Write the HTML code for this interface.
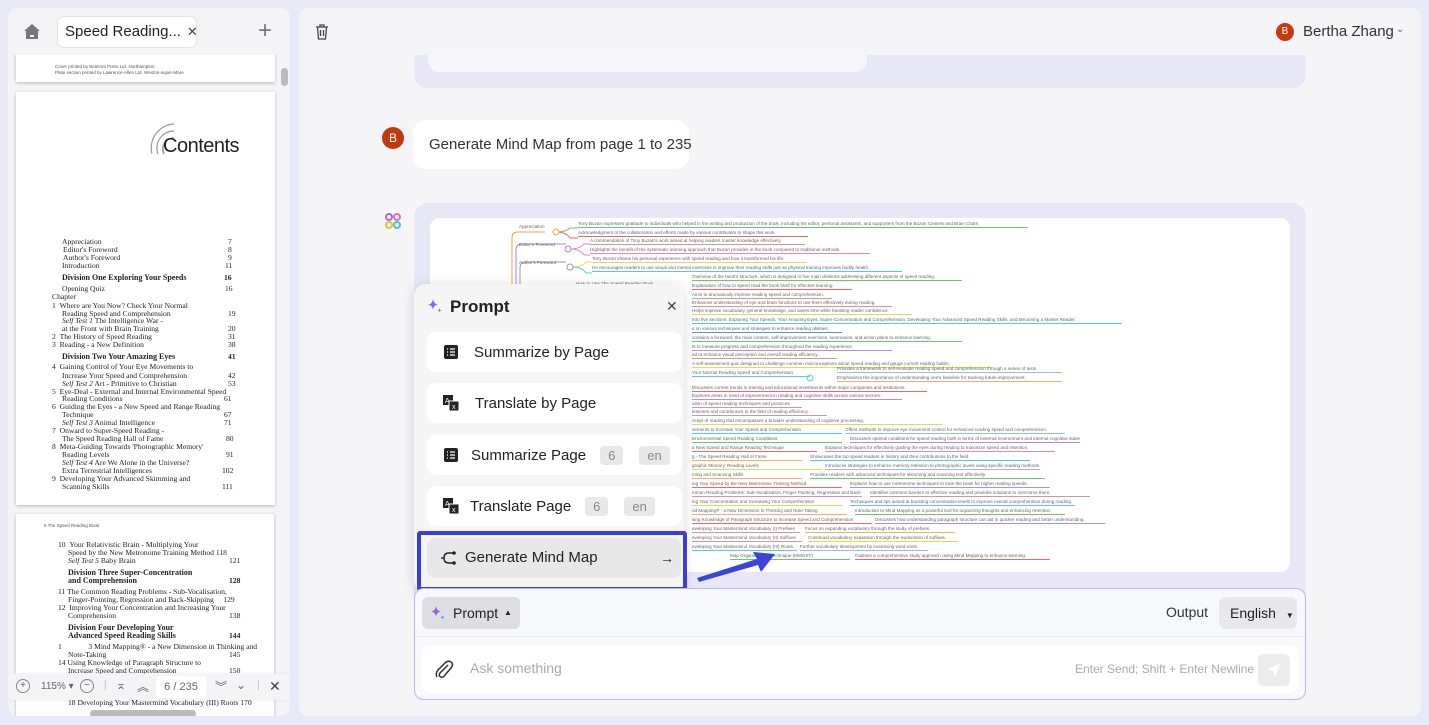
<!DOCTYPE html>
<html><head><meta charset="utf-8">
<style>
*{box-sizing:border-box;margin:0;padding:0}
body{width:1429px;height:725px;overflow:hidden;background:#e9e9f7;font-family:"Liberation Sans",sans-serif;position:relative;color:#222}
.abs{position:absolute}
#side{left:8px;top:8px;width:282px;height:708px;background:#f4f4f6;border-radius:10px;overflow:hidden}
#main{left:299px;top:8px;width:1122px;height:708px;background:#f5f5f7;border-radius:10px;overflow:hidden}
.pg{background:#fff;box-shadow:0 1px 3px rgba(0,0,0,.25)}
.t{position:absolute;font-family:"Liberation Serif",serif;font-size:7.6px;color:#222;white-space:nowrap;line-height:8px}
.b{font-weight:bold;font-size:8px}
.n{position:absolute;font-family:"Liberation Serif",serif;font-size:7.6px;line-height:8px}
.mm{position:absolute;font-size:4.6px;color:#666;white-space:nowrap;line-height:6px;border-bottom:1px solid;overflow:hidden}
.item{position:absolute;left:13px;width:255px;height:40px;background:#fff;border-radius:9px;font-size:15px;color:#222;display:flex;align-items:center;white-space:nowrap}
.tag{display:inline-block;background:#e8e8e8;color:#888;border-radius:4px;font-size:13px;padding:2px 8px;margin-left:14px}
</style></head><body>

<div id="side" class="abs">
  <svg class="abs" style="left:16px;top:16px" width="16" height="15" viewBox="0 0 16 15"><path d="M8 0 L16 7 L14 7 L14 15 L2 15 L2 7 L0 7Z" fill="#777"/><rect x="6" y="11" width="4" height="2" fill="#f4f4f6"/></svg>
  <div class="abs" style="left:49px;top:8px;width:140px;height:32px;background:#fff;border-radius:7px;border:1px solid #e4e4e4;font-size:15px;line-height:30px;padding-left:7px;white-space:nowrap">Speed Reading...<span style="margin-left:6px;color:#444;font-size:13px">✕</span></div>
  <div class="abs" style="left:250px;top:9px;font-size:24px;color:#777;font-weight:300">+</div>
  <div class="abs" style="left:0;top:47px;width:282px;height:661px;overflow:hidden">
    <div class="abs pg" style="left:8px;top:-20px;width:259px;height:47px">
      <div class="t" style="left:39px;top:28px;font-size:4.5px;font-family:'Liberation Sans';color:#555">Cover printed by Belmont Press Ltd. Northampton</div>
      <div class="t" style="left:39px;top:34px;font-size:4.5px;font-family:'Liberation Sans';color:#555">Plate section printed by Lawrence-Allen Ltd. Weston-super-Mare</div>
    </div>
    <div class="abs pg" style="left:8px;top:37px;width:259px;height:413px">
      <svg class="abs" style="left:118px;top:24px" width="42" height="42"><path d="M18 38 A24 24 0 0 1 40 8" stroke="#999" stroke-width="1.2" fill="none"/><path d="M24 38 A17 17 0 0 1 40 15" stroke="#999" stroke-width="1.2" fill="none"/><path d="M30 38 A11 11 0 0 1 40 22" stroke="#999" stroke-width="1.6" fill="none"/></svg>
      <div class="abs" style="left:147px;top:43px;font-size:20px;color:#222;letter-spacing:-.5px">Contents</div>
      <div class="t" style="left:46px;top:146px">Appreciation</div><div class="n" style="left:212px;top:146px">7</div>
      <div class="t" style="left:47px;top:154px">Editor's Foreword</div><div class="n" style="left:212px;top:154px">8</div>
      <div class="t" style="left:47px;top:162px">Author's Foreword</div><div class="n" style="left:212px;top:162px">9</div>
      <div class="t" style="left:46px;top:170px">Introduction</div><div class="n" style="left:209px;top:170px">11</div>
      <div class="t b" style="left:46px;top:182px">Division One Exploring Your Speeds</div><div class="n b" style="left:208px;top:182px">16</div>
      <div class="t" style="left:46px;top:193px">Opening Quiz</div><div class="n" style="left:209px;top:193px">16</div>
      <div class="t" style="left:36px;top:201px">Chapter</div>
      <div class="t" style="left:36px;top:210px">1&nbsp;&nbsp;Where are You Now? Check Your Normal</div>
      <div class="t" style="left:46px;top:218px">Reading Speed and Comprehension</div><div class="n" style="left:212px;top:218px">19</div>
      <div class="t" style="left:46px;top:225px"><i>Self Test 1</i> The Intelligence War -</div>
      <div class="t" style="left:46px;top:233px">at the Front with Brain Training</div><div class="n" style="left:212px;top:233px">20</div>
      <div class="t" style="left:36px;top:241px">2&nbsp;&nbsp;The History of Speed Reading</div><div class="n" style="left:212px;top:241px">31</div>
      <div class="t" style="left:36px;top:249px">3&nbsp;&nbsp;Reading - a New Definition</div><div class="n" style="left:212px;top:249px">38</div>
      <div class="t b" style="left:46px;top:261px">Division Two Your Amazing Eyes</div><div class="n b" style="left:212px;top:261px">41</div>
      <div class="t" style="left:36px;top:271px">4&nbsp;&nbsp;Gaining Control of Your Eye Movements to</div>
      <div class="t" style="left:46px;top:280px">Increase Your Speed and Comprehension</div><div class="n" style="left:212px;top:280px">42</div>
      <div class="t" style="left:46px;top:288px"><i>Self Test 2</i> Art - Primitive to Christian</div><div class="n" style="left:212px;top:288px">53</div>
      <div class="t" style="left:36px;top:296px">5&nbsp;&nbsp;Eye-Deal - External and Internal Environmental Speed</div>
      <div class="t" style="left:46px;top:303px">Reading Conditions</div><div class="n" style="left:208px;top:303px">61</div>
      <div class="t" style="left:36px;top:311px">6&nbsp;&nbsp;Guiding the Eyes - a New Speed and Range Reading</div>
      <div class="t" style="left:46px;top:319px">Technique</div><div class="n" style="left:208px;top:319px">67</div>
      <div class="t" style="left:46px;top:327px"><i>Self Test 3</i> Animal Intelligence</div><div class="n" style="left:208px;top:327px">71</div>
      <div class="t" style="left:36px;top:335px">7&nbsp;&nbsp;Onward to Super-Speed Reading -</div>
      <div class="t" style="left:46px;top:343px">The Speed Reading Hall of Fame</div><div class="n" style="left:210px;top:343px">80</div>
      <div class="t" style="left:36px;top:351px">8&nbsp;&nbsp;Meta-Guiding Towards 'Photographic Memory'</div>
      <div class="t" style="left:46px;top:359px">Reading Levels</div><div class="n" style="left:210px;top:359px">91</div>
      <div class="t" style="left:46px;top:367px"><i>Self Test 4</i> Are We Alone in the Universe?</div>
      <div class="t" style="left:46px;top:375px">Extra Terrestrial Intelligences</div><div class="n" style="left:206px;top:375px">102</div>
      <div class="t" style="left:36px;top:383px">9&nbsp;&nbsp;Developing Your Advanced Skimming and</div>
      <div class="t" style="left:46px;top:391px">Scanning Skills</div><div class="n" style="left:206px;top:391px">111</div>
    </div>
    <div class="abs pg" style="left:8px;top:459px;width:258px;height:220px">
      <div class="t" style="left:28px;top:8px;font-size:4.5px;font-family:'Liberation Sans';color:#555">6 The Speed Reading Book</div>
      <div class="t" style="left:42px;top:27px">10&nbsp;&nbsp;Your Relativistic Brain - Multiplying Your</div>
      <div class="t" style="left:52px;top:35px">Speed by the New Metronome Training Method 118</div>
      <div class="t" style="left:52px;top:43px"><i>Self Test 5</i> Baby Brain</div><div class="n" style="left:213px;top:43px">121</div>
      <div class="t b" style="left:52px;top:55px">Division Three Super-Concentration</div>
      <div class="t b" style="left:52px;top:63px">and Comprehension</div><div class="n b" style="left:213px;top:63px">128</div>
      <div class="t" style="left:42px;top:74px">11 The Common Reading Problems - Sub-Vocalisation,</div>
      <div class="t" style="left:52px;top:82px">Finger-Pointing, Regression and Back-Skipping&nbsp;&nbsp;&nbsp;&nbsp;&nbsp;129</div>
      <div class="t" style="left:42px;top:90px">12&nbsp;&nbsp;Improving Your Concentration and Increasing Your</div>
      <div class="t" style="left:52px;top:98px">Comprehension</div><div class="n" style="left:213px;top:98px">138</div>
      <div class="t b" style="left:52px;top:110px">Division Four Developing Your</div>
      <div class="t b" style="left:52px;top:118px">Advanced Speed Reading Skills</div><div class="n b" style="left:213px;top:118px">144</div>
      <div class="t" style="left:42px;top:129px">1&nbsp;&nbsp;&nbsp;&nbsp;&nbsp;&nbsp;&nbsp;&nbsp;&nbsp;&nbsp;&nbsp;&nbsp;&nbsp;&nbsp;3 Mind Mapping® - a New Dimension in Thinking and</div>
      <div class="t" style="left:52px;top:137px">Note-Taking</div><div class="n" style="left:213px;top:137px">145</div>
      <div class="t" style="left:42px;top:145px">14 Using Knowledge of Paragraph Structure to</div>
      <div class="t" style="left:52px;top:153px">Increase Speed and Comprehension</div><div class="n" style="left:213px;top:153px">150</div>
      <div class="t" style="left:52px;top:185px">18 Developing Your Mastermind Vocabulary (III) Roots 170</div>
    </div>
  </div>
  <div class="abs" style="left:273px;top:60px;width:7px;height:18px;background:#bbb;border-radius:4px"></div>
  <div class="abs" style="left:82px;top:702px;width:106px;height:7px;background:#bbb;border-radius:4px"></div>
  <div class="abs" style="left:0;top:666px;width:282px;height:26px;background:#f4f4f6;box-shadow:0 0 4px rgba(0,0,0,.08);font-size:10px;color:#666">
    <span class="abs" style="left:8px;top:5px;width:14px;height:14px;border:1px solid #888;border-radius:50%;text-align:center;line-height:12px">+</span>
    <span class="abs" style="left:33px;top:7px">115% ▾</span>
    <span class="abs" style="left:72px;top:5px;width:14px;height:14px;border:1px solid #888;border-radius:50%;text-align:center;line-height:11px">−</span>
    <span class="abs" style="left:96px;top:6px;color:#bbb">|</span>
    <span class="abs" style="left:108px;top:4px;font-size:12px">⌅</span>
    <span class="abs" style="left:129px;top:4px;font-size:12px">︽</span>
    <span class="abs" style="left:148px;top:2px;width:50px;height:22px;background:#fff;border-radius:4px;text-align:center;line-height:22px;font-size:11px">6 / 235</span>
    <span class="abs" style="left:207px;top:4px;font-size:12px">︾</span>
    <span class="abs" style="left:228px;top:4px;font-size:12px">⌄</span>
    <span class="abs" style="left:249px;top:6px;color:#bbb">|</span>
    <span class="abs" style="left:261px;top:4px;font-size:14px;color:#444">✕</span>
  </div>
</div>

<div id="main" class="abs">
  <div class="abs" style="left:115px;top:-30px;width:892px;height:110px;background:#e8e7f7;border-radius:14px"></div>
  <div class="abs" style="left:129px;top:-30px;width:439px;height:94px;background:#f7f7fb;border-radius:12px"></div>
  <div class="abs" style="left:0;top:0;width:1122px;height:47px;background:#f5f5f7"></div>
  <svg class="abs" style="left:16px;top:16px" width="14" height="16" viewBox="0 0 14 16"><path d="M1 3h12M5 3V1h4v2M2.5 3l1 12h7l1-12M5.5 6v6M8.5 6v6" stroke="#444" stroke-width="1.3" fill="none"/></svg>
  <div class="abs" style="left:977px;top:15px;width:18px;height:18px;border-radius:50%;background:#c73a10;color:#fff;font-size:10px;text-align:center;line-height:18px">B</div>
  <div class="abs" style="left:1004px;top:15px;font-size:15px;color:#333;white-space:nowrap">Bertha Zhang</div>
  <div class="abs" style="left:1097px;top:16px;font-size:10px;color:#666">⌄</div>

  <div class="abs" style="left:83px;top:119px;width:22px;height:22px;border-radius:50%;background:#c0390f;color:#fff;font-size:12px;text-align:center;line-height:22px">B</div>
  <div class="abs" style="left:114px;top:112px;width:276px;height:49px;background:#fff;border-radius:14px;font-size:15px;line-height:49px;padding-left:16px;color:#333;white-space:nowrap">Generate Mind Map from page 1 to 235</div>

  <svg class="abs" style="left:86px;top:205px" width="16" height="16" viewBox="0 0 16 16"><rect x="1" y="1" width="6" height="6" rx="3" fill="none" stroke="#a06cf0" stroke-width="2"/><rect x="9" y="1" width="6" height="6" rx="3" fill="none" stroke="#f06cb0" stroke-width="2"/><rect x="1" y="9" width="6" height="6" rx="3" fill="none" stroke="#f5c030" stroke-width="2"/><rect x="9" y="9" width="6" height="6" rx="3" fill="none" stroke="#40c8e0" stroke-width="2"/></svg>

  <div class="abs" style="left:115px;top:195px;width:892px;height:420px;background:#e8e7f7;border-radius:14px"></div>
  <div class="abs" style="left:131px;top:210px;width:860px;height:354px;background:#fff;border-radius:10px;overflow:hidden">
    <svg class="abs" style="left:0;top:0" width="860" height="354">
      <path d="M82 20 V360" stroke="#f5a050" stroke-width="1"/>
      <path d="M82 20 Q82 14 88 14 H115" stroke="#f5a050" fill="none"/>
      <path d="M86 32 V360" stroke="#b080e0"/>
      <path d="M86 32 Q86 26 92 26 H136" stroke="#b080e0" fill="none"/>
      <path d="M90 50 Q90 44 96 44 H136" stroke="#999" fill="none"/>
      <path d="M90 50 V360" stroke="#999"/>
      <path d="M126 14 Q136 14 140 10 H148" stroke="#6c6" fill="none"/><path d="M126 14 Q136 14 140 20 H148" stroke="#e66" fill="none"/>
      <path d="M140 31 Q150 31 154 26 H160" stroke="#c99" fill="none"/><path d="M140 31 Q150 31 154 37 H160" stroke="#e8a" fill="none"/>
      <path d="M142 49 Q152 49 156 44 H162" stroke="#dd5" fill="none"/><path d="M142 49 Q152 49 156 55 H162" stroke="#5cd" fill="none"/>
      <path d="M40 76 H240" stroke="#f5a050"/>
      <circle cx="126" cy="14" r="3" fill="#fff" stroke="#f5a050"/>
      <circle cx="138" cy="31" r="3" fill="#fff" stroke="#b080e0"/>
      <circle cx="140" cy="49" r="3" fill="#fff" stroke="#999"/>
      <circle cx="240" cy="76" r="3" fill="#fff" stroke="#f5a050"/>
      <circle cx="380" cy="160" r="3" fill="#fff" stroke="#5cd"/>
    </svg>
    <div class="mm" style="left:89px;top:6px;border-color:transparent">Appreciation</div>
    <div class="mm" style="left:89px;top:24px;border-color:transparent">Editor's Foreword</div>
    <div class="mm" style="left:89px;top:42px;border-color:transparent">Author's Foreword</div>
    <div class="mm" style="left:146px;top:63px;border-color:#f5a050">How to Use The Speed Reading Book</div>
    <div class="mm" style="left:148px;top:3px;width:450px;border-color:#6c6">Tony Buzan expresses gratitude to individuals who helped in the writing and production of the book, including his editor, personal assistants, and supporters from the Buzan Centres and Brain Clubs.</div>
    <div class="mm" style="left:148px;top:12px;width:230px;border-color:#e66">Acknowledgment of the collaboration and efforts made by various contributors to shape this work.</div>
    <div class="mm" style="left:160px;top:20px;width:215px;border-color:#c99">A commendation of Tony Buzan's work aimed at helping readers master knowledge effectively.</div>
    <div class="mm" style="left:160px;top:29px;width:280px;border-color:#e8a">Highlights the benefit of the systematic learning approach that Buzan provides in the book compared to traditional methods.</div>
    <div class="mm" style="left:162px;top:38px;width:215px;border-color:#dd5">Tony Buzan shares his personal experience with speed reading and how it transformed his life.</div>
    <div class="mm" style="left:162px;top:47px;width:310px;border-color:#5cd">He encourages readers to use visual and mental exercises to improve their reading skills just as physical training improves bodily health.</div>
    <div class="mm" style="left:262px;top:56px;width:270px;border-color:#6c6">Overview of the book's structure, which is designed in five main divisions addressing different aspects of speed reading.</div>
    <div class="mm" style="left:262px;top:65px;width:160px;border-color:#e66">Explanation of how to speed read the book itself for effective learning.</div>
    <div class="mm" style="left:262px;top:74px;width:140px;border-color:#c99">Aims to dramatically improve reading speed and comprehension.</div>
    <div class="mm" style="left:262px;top:82px;width:200px;border-color:#e8a">Enhances understanding of eye and brain functions to use them effectively during reading.</div>
    <div class="mm" style="left:262px;top:90px;width:220px;border-color:#dd5">Helps improve vocabulary, general knowledge, and saves time while boosting reader confidence.</div>
    <div class="mm" style="left:262px;top:99px;width:430px;border-color:#5cd">Into five sections: Exploring Your Speeds, Your Amazing Eyes, Super-Concentration and Comprehension, Developing Your Advanced Speed Reading Skills, and Becoming a Master Reader.</div>
    <div class="mm" style="left:262px;top:108px;width:150px;border-color:#59c">s on various techniques and strategies to enhance reading abilities.</div>
    <div class="mm" style="left:262px;top:117px;width:270px;border-color:#6c6">contains a foreword, the main content, self-improvement exercises, summaries, and action plans to enhance learning.</div>
    <div class="mm" style="left:262px;top:126px;width:200px;border-color:#b8e">ts to measure progress and comprehension throughout the reading experience.</div>
    <div class="mm" style="left:262px;top:134px;width:145px;border-color:#c99">ed to enhance visual perception and overall reading efficiency.</div>
    <div class="mm" style="left:262px;top:143px;width:300px;border-color:#dd5">A self-assessment quiz designed to challenge common misconceptions about speed reading and gauge current reading habits.</div>
    <div class="mm" style="left:262px;top:152px;width:118px;border-color:#5cd">Your Normal Reading Speed and Comprehension</div>
    <div class="mm" style="left:407px;top:148px;width:225px;border-color:#9bd">Provides a framework to self-evaluate reading speed and comprehension through a series of tests.</div>
    <div class="mm" style="left:407px;top:157px;width:225px;border-color:#fa6">Emphasizes the importance of understanding one's baseline for tracking future improvement.</div>
    <div class="mm" style="left:262px;top:167px;width:235px;border-color:#e66">Discusses current trends in training and educational investments within major companies and institutions.</div>
    <div class="mm" style="left:262px;top:175px;width:210px;border-color:#b8e">Explores areas in need of improvement in reading and cognitive skills across various sectors.</div>
    <div class="mm" style="left:262px;top:183px;width:110px;border-color:#e8a">ution of speed reading techniques and practices.</div>
    <div class="mm" style="left:262px;top:191px;width:135px;border-color:#c99">lestones and contributors to the field of reading efficiency.</div>
    <div class="mm" style="left:262px;top:200px;width:250px;border-color:#dd5">ncept of reading that encompasses a broader understanding of cognitive processing.</div>
    <div class="mm" style="left:262px;top:209px;width:150px;border-color:#5cd">vements to Increase Your Speed and Comprehension</div>
    <div class="mm" style="left:415px;top:209px;width:220px;border-color:#9bd">Offers methods to improve eye movement control for enhanced reading speed and comprehension.</div>
    <div class="mm" style="left:262px;top:218px;width:150px;border-color:#6c6">Environmental Speed Reading Conditions</div>
    <div class="mm" style="left:420px;top:218px;width:230px;border-color:#b8e">Discusses optimal conditions for speed reading both in terms of external environment and internal cognitive states.</div>
    <div class="mm" style="left:262px;top:227px;width:125px;border-color:#e66">a New Speed and Range Reading Technique</div>
    <div class="mm" style="left:395px;top:227px;width:230px;border-color:#e8a">Explains techniques for effectively guiding the eyes during reading to maximize speed and retention.</div>
    <div class="mm" style="left:262px;top:236px;width:110px;border-color:#fa6">g - The Speed Reading Hall of Fame</div>
    <div class="mm" style="left:380px;top:236px;width:220px;border-color:#5cd">Showcases the top speed readers in history and their contributions to the field.</div>
    <div class="mm" style="left:262px;top:245px;width:130px;border-color:#dd5">graphic Memory' Reading Levels</div>
    <div class="mm" style="left:395px;top:245px;width:215px;border-color:#9bd">Introduces strategies to enhance memory retention to photographic levels using specific reading methods.</div>
    <div class="mm" style="left:262px;top:254px;width:110px;border-color:#fa6">ming and Scanning Skills</div>
    <div class="mm" style="left:380px;top:254px;width:235px;border-color:#6c6">Provides readers with advanced techniques for skimming and scanning text effectively.</div>
    <div class="mm" style="left:262px;top:263px;width:150px;border-color:#e66">ing Your Speed by the New Metronome Training Method</div>
    <div class="mm" style="left:420px;top:263px;width:200px;border-color:#b8e">Explains how to use metronome techniques to train the brain for higher reading speeds.</div>
    <div class="mm" style="left:262px;top:272px;width:170px;border-color:#e8a">mmon Reading Problems: Sub-Vocalization, Finger-Pointing, Regression and Back-Skipping</div>
    <div class="mm" style="left:440px;top:272px;width:220px;border-color:#c99">Identifies common barriers to effective reading and provides solutions to overcome them.</div>
    <div class="mm" style="left:262px;top:281px;width:150px;border-color:#dd5">ing Your Concentration and Increasing Your Comprehension</div>
    <div class="mm" style="left:420px;top:281px;width:225px;border-color:#5cd">Techniques and tips aimed at boosting concentration levels to improve overall comprehension during reading.</div>
    <div class="mm" style="left:262px;top:290px;width:155px;border-color:#fa6">nd Mapping® - a New Dimension in Thinking and Note-Taking</div>
    <div class="mm" style="left:425px;top:290px;width:210px;border-color:#6c6">Introduction to Mind Mapping as a powerful tool for organizing thoughts and enhancing retention.</div>
    <div class="mm" style="left:262px;top:299px;width:180px;border-color:#e66">sing Knowledge of Paragraph Structure to Increase Speed and Comprehension</div>
    <div class="mm" style="left:445px;top:299px;width:230px;border-color:#b8e">Discusses how understanding paragraph structure can aid in quicker reading and better understanding.</div>
    <div class="mm" style="left:262px;top:308px;width:108px;border-color:#e8a">eveloping Your Mastermind Vocabulary (I) Prefixes</div>
    <div class="mm" style="left:375px;top:308px;width:150px;border-color:#fa6">Focus on expanding vocabulary through the study of prefixes.</div>
    <div class="mm" style="left:262px;top:317px;width:110px;border-color:#c99">eveloping Your Mastermind Vocabulary (II) Suffixes</div>
    <div class="mm" style="left:378px;top:317px;width:150px;border-color:#dd5">Continued vocabulary expansion through the exploration of suffixes.</div>
    <div class="mm" style="left:262px;top:326px;width:105px;border-color:#5cd">eveloping Your Mastermind Vocabulary (III) Roots</div>
    <div class="mm" style="left:370px;top:326px;width:128px;border-color:#9bd">Further vocabulary development by examining word roots.</div>
    <div class="mm" style="left:300px;top:335px;width:120px;border-color:#6c6">Map Organic Study Technique (MMOST)</div>
    <div class="mm" style="left:425px;top:335px;width:195px;border-color:#e66">Outlines a comprehensive study approach using Mind Mapping to enhance learning.</div>
  </div>
  <svg class="abs" style="left:380px;top:530px" width="120" height="70"><path d="M18 40 L78 21 L74 14 L96 16 L82 34 L79 27 L20 44Z" fill="#3a44d6"/></svg>

  <div class="abs" style="left:115px;top:276px;width:270px;height:308px;background:#f5f5f5;border-radius:12px;box-shadow:0 2px 14px rgba(0,0,0,.15)">
    <svg class="abs" style="left:13px;top:14px" width="16" height="16" viewBox="0 0 16 16"><path d="M6 1 Q6.5 6 11 6.5 Q6.5 7 6 12 Q5.5 7 1 6.5 Q5.5 6 6 1Z" fill="#8a60f0"/><path d="M12.5 10 Q12.7 12 14.5 12.3 Q12.7 12.6 12.5 14.5 Q12.3 12.6 10.5 12.3 Q12.3 12 12.5 10Z" fill="#4a8af0"/></svg>
    <div class="abs" style="left:36px;top:13px;font-size:17px;font-weight:bold;color:#222">Prompt</div>
    <div class="abs" style="left:252px;top:14px;font-size:14px;color:#444">✕</div>
    <div class="item" style="top:48px"><svg style="margin-left:17px" width="14" height="14" viewBox="0 0 14 14"><rect width="14" height="14" rx="2" fill="#222"/><path d="M3 4h1M6 4h5M3 7h1M6 7h5M3 10h1M6 10h5" stroke="#fff" stroke-width="1.3"/></svg><span style="margin-left:16px">Summarize by Page</span></div>
    <div class="item" style="top:99px"><svg style="margin-left:16px" width="16" height="16" viewBox="0 0 16 16"><rect x="0" y="0" width="10" height="10" fill="#222"/><rect x="6" y="6" width="10" height="10" fill="#222" stroke="#fff"/><text x="2" y="8" font-size="7" fill="#fff" font-family="Liberation Sans">A</text><text x="9" y="14" font-size="7" fill="#fff" font-family="Liberation Sans">x</text></svg><span style="margin-left:16px">Translate by Page</span></div>
    <div class="item" style="top:151px"><svg style="margin-left:17px" width="14" height="14" viewBox="0 0 14 14"><rect width="14" height="14" rx="2" fill="#222"/><path d="M3 4h1M6 4h5M3 7h1M6 7h5M3 10h1M6 10h5" stroke="#fff" stroke-width="1.3"/></svg><span style="margin-left:13px">Summarize Page</span><span class="tag">6</span><span class="tag" style="margin-left:16px">en</span></div>
    <div class="item" style="top:202px"><svg style="margin-left:16px" width="16" height="16" viewBox="0 0 16 16"><rect x="0" y="0" width="10" height="10" fill="#222"/><rect x="6" y="6" width="10" height="10" fill="#222" stroke="#fff"/><text x="2" y="8" font-size="7" fill="#fff" font-family="Liberation Sans">A</text><text x="9" y="14" font-size="7" fill="#fff" font-family="Liberation Sans">x</text></svg><span style="margin-left:11px">Translate Page</span><span class="tag">6</span><span class="tag" style="margin-left:16px">en</span></div>
  </div>
  <div class="abs" style="left:118px;top:523px;width:270px;height:60px;border:4px solid #3d40cf;border-radius:3px;background:#f5f5f5">
    <div class="abs" style="left:6px;top:3px;width:254px;height:40px;background:#e8e8e8;border-radius:8px;font-size:15px;line-height:40px;white-space:nowrap">
      <svg class="abs" style="left:13px;top:12px" width="16" height="16" viewBox="0 0 16 16"><path d="M14 3 H9 Q4 3 4 8 Q4 13 9 13 H14" stroke="#222" stroke-width="1.4" fill="none"/><path d="M1 8 H4" stroke="#222" stroke-width="1.4"/><circle cx="14" cy="3" r="1.8" fill="#222"/><circle cx="14" cy="13" r="1.8" fill="#222"/></svg>
      <span class="abs" style="left:38px;top:0">Generate Mind Map</span>
      <span class="abs" style="left:233px;top:0;font-size:14px">→</span>
    </div>
  </div>

  <div class="abs" style="left:115px;top:580px;width:892px;height:112px;border:1.5px solid #b8b8f6;border-radius:10px;background:#f7f8fc;overflow:hidden">
    <div class="abs" style="left:7px;top:8px;width:98px;height:32px;background:#dddde2;border-radius:6px;font-size:14px;line-height:32px">
      <svg class="abs" style="left:8px;top:8px" width="16" height="16" viewBox="0 0 16 16"><path d="M6 1 Q6.5 6 11 6.5 Q6.5 7 6 12 Q5.5 7 1 6.5 Q5.5 6 6 1Z" fill="#8a60f0"/><path d="M12.5 10 Q12.7 12 14.5 12.3 Q12.7 12.6 12.5 14.5 Q12.3 12.6 10.5 12.3 Q12.3 12 12.5 10Z" fill="#4a8af0"/></svg>
      <span class="abs" style="left:31px">Prompt</span><span class="abs" style="left:82px;font-size:8px">▲</span>
    </div>
    <div class="abs" style="left:751px;top:15px;font-size:14px;color:#333">Output</div>
    <div class="abs" style="left:804px;top:8px;width:78px;height:32px;background:#e8e8ec;border-radius:7px;font-size:14px;line-height:32px;padding-left:11px;white-space:nowrap">English <span style="font-size:8px;margin-left:6px">▼</span></div>
    <div class="abs" style="left:0;top:47px;width:892px;height:1px;background:#e6e6ee"></div>
    <div class="abs" style="left:7px;top:57px;width:876px;height:47px;background:#fff;border-radius:8px">
      <svg class="abs" style="left:12px;top:13px" width="20" height="22" viewBox="0 0 20 22"><path d="M14 6 L6 14 Q4 17 7 18 Q9 19 11 16 L17 9 Q20 5 17 3 Q14 1 11 4 L4 11 Q1 15 3 18" stroke="#333" stroke-width="1.5" fill="none"/></svg>
      <div class="abs" style="left:48px;top:14px;font-size:14px;color:#aaa">Ask something</div>
      <div class="abs" style="left:653px;top:16px;font-size:12px;color:#aaa;white-space:nowrap">Enter Send; Shift + Enter Newline</div>
      <div class="abs" style="left:836px;top:8px;width:32px;height:32px;background:#ececec;border-radius:6px">
        <svg class="abs" style="left:8px;top:8px" width="16" height="16" viewBox="0 0 16 16"><path d="M15 1 L1 7 L7 9 L9 15Z" fill="#fff"/></svg>
      </div>
    </div>
  </div>
</div>
</body></html>
